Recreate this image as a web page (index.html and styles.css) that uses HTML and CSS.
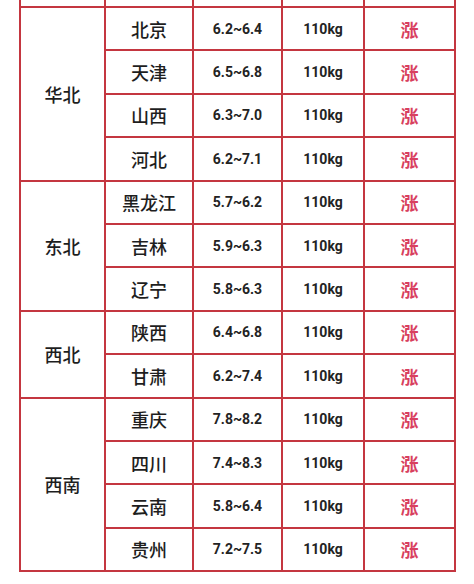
FILE: index.html
```html
<!DOCTYPE html>
<html lang="zh-CN">
<head>
<meta charset="utf-8">
<title>猪价表</title>
<link rel="stylesheet" href="styles.css">
</head>
<body>
<div class="sheet">
  <div class="c top"></div><div class="c top"></div><div class="c top"></div><div class="c top"></div><div class="c top"></div>

  <div class="c region r4">华北</div>
  <div class="c prov">北京</div><div class="c num">6.2~6.4</div><div class="c num">110kg</div><div class="c up">涨</div>
  <div class="c prov">天津</div><div class="c num">6.5~6.8</div><div class="c num">110kg</div><div class="c up">涨</div>
  <div class="c prov">山西</div><div class="c num">6.3~7.0</div><div class="c num">110kg</div><div class="c up">涨</div>
  <div class="c prov">河北</div><div class="c num">6.2~7.1</div><div class="c num">110kg</div><div class="c up">涨</div>

  <div class="c region r3">东北</div>
  <div class="c prov">黑龙江</div><div class="c num">5.7~6.2</div><div class="c num">110kg</div><div class="c up">涨</div>
  <div class="c prov">吉林</div><div class="c num">5.9~6.3</div><div class="c num">110kg</div><div class="c up">涨</div>
  <div class="c prov">辽宁</div><div class="c num">5.8~6.3</div><div class="c num">110kg</div><div class="c up">涨</div>

  <div class="c region r2">西北</div>
  <div class="c prov">陕西</div><div class="c num">6.4~6.8</div><div class="c num">110kg</div><div class="c up">涨</div>
  <div class="c prov">甘肃</div><div class="c num">6.2~7.4</div><div class="c num">110kg</div><div class="c up">涨</div>

  <div class="c region r4">西南</div>
  <div class="c prov">重庆</div><div class="c num">7.8~8.2</div><div class="c num">110kg</div><div class="c up">涨</div>
  <div class="c prov">四川</div><div class="c num">7.4~8.3</div><div class="c num">110kg</div><div class="c up">涨</div>
  <div class="c prov">云南</div><div class="c num">5.8~6.4</div><div class="c num">110kg</div><div class="c up">涨</div>
  <div class="c prov">贵州</div><div class="c num">7.2~7.5</div><div class="c num">110kg</div><div class="c up">涨</div>
</div>
</body>
</html>
```

FILE: styles.css
```css
html, body {
  margin: 0;
  padding: 0;
  background: #ffffff;
}
body {
  width: 474px;
  height: 584px;
  overflow: hidden;
  font-family: "Noto Sans CJK SC", "Noto Sans", sans-serif;
  color: #222222;
}
.sheet {
  display: grid;
  grid-template-columns: 85px 88px 89px 82px 91px;
  grid-template-rows: 8px repeat(13, 43.4px);
  margin-left: 19px;
  width: 435px;
  border-left: 2px solid #c43640;
  box-sizing: border-box;
}
.c {
  box-sizing: border-box;
  border-right: 2px solid #c43640;
  border-bottom: 2px solid #c43640;
  display: flex;
  align-items: center;
  justify-content: center;
}
.region {
  grid-column: 1;
  font-size: 18px;
  font-weight: 500;
  color: #1e1e1e;
}
.r4 { grid-row: span 4; }
.r3 { grid-row: span 3; }
.r2 { grid-row: span 2; }
.prov {
  font-size: 18px;
  font-weight: 500;
  color: #1e1e1e;
}
.num {
  font-family: Roboto, "Liberation Sans", sans-serif;
  font-size: 14px;
  font-weight: 700;
  color: #232323;
}
.up {
  font-size: 18px;
  font-weight: 700;
  color: #d8405e;
}
```
